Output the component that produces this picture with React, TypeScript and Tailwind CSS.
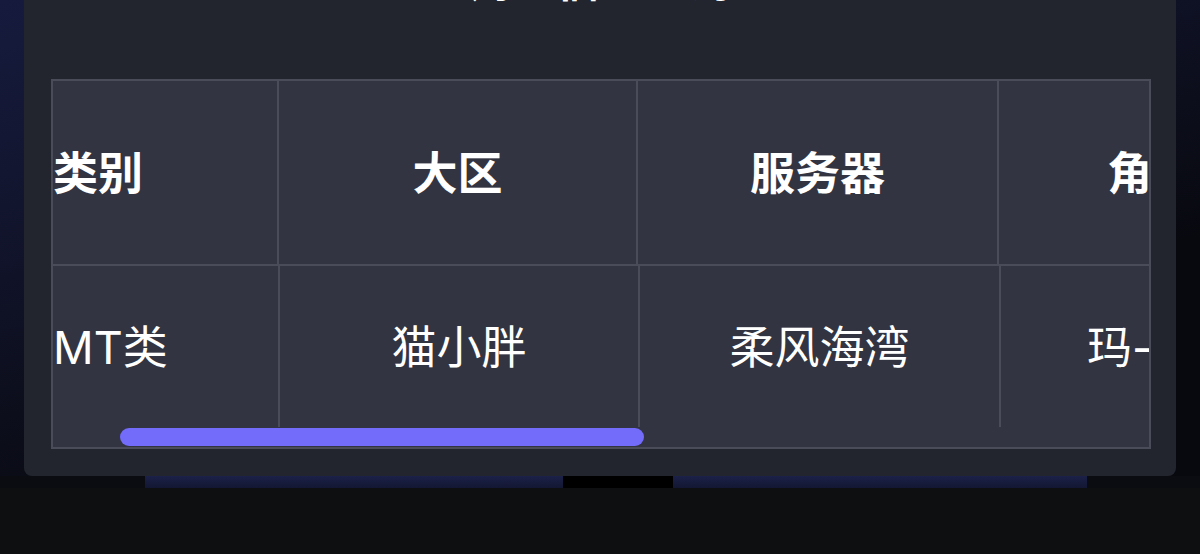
import React from "react";

const font = { fontFamily: 'Inter, "Noto Sans CJK SC", "Noto Sans", sans-serif' };

export default function App() {
  return (
    <div
      className="flex h-[554px] w-[1200px] flex-col overflow-hidden bg-[#0e0f11] text-white"
      style={font}
    >
      {/* backdrop behind the card */}
      <div className="flex h-[476px] bg-[linear-gradient(165deg,#161b3e_0%,#101328_35%,#08090f_70%)] px-[24px]">
        <div className="flex w-full flex-col overflow-hidden rounded-b-lg bg-[#23252e] px-[27px]">
          <h2 className="-mt-[41px] h-[44px] text-center text-[44px] leading-[44px] font-bold text-white">
            角色信息查询
          </h2>

          <div className="relative mt-[76px] h-[370px] w-[1100px] overflow-hidden border-2 border-[#4a4c5a] bg-[#323441]">
            {/* header row */}
            <div className="flex h-[185px] border-b-2 border-[#4a4c5a] text-[45px] font-bold">
              <div className="flex w-[226px] shrink-0 items-center border-r-2 border-[#4a4c5a] pt-[2px]">
                类别
              </div>
              <div className="flex w-[359px] shrink-0 items-center justify-center border-r-2 border-[#4a4c5a] pt-[2px]">
                大区
              </div>
              <div className="flex w-[361px] shrink-0 items-center justify-center border-r-2 border-[#4a4c5a] pt-[2px]">
                服务器
              </div>
              <div className="flex w-[360px] shrink-0 items-center pl-[108px] pt-[2px] whitespace-nowrap">
                角色名
              </div>
            </div>

            {/* body row */}
            <div className="flex h-[161px] text-[45px]">
              <div className="flex w-[227px] shrink-0 items-center border-r-2 border-[#4a4c5a] pt-[3px] whitespace-nowrap">
                MT类
              </div>
              <div className="flex w-[360px] shrink-0 items-center justify-center border-r-2 border-[#4a4c5a] pt-[3px]">
                猫小胖
              </div>
              <div className="flex w-[361px] shrink-0 items-center justify-center border-r-2 border-[#4a4c5a] pt-[3px]">
                柔风海湾
              </div>
              <div className="flex w-[360px] shrink-0 items-center pl-[86px] pt-[3px] whitespace-nowrap">
                玛-布林
              </div>
            </div>

            {/* horizontal scrollbar track */}
            <div className="h-[20px] pt-[1px] pl-[67px]">
              <div className="h-[18px] w-[524px] rounded-full bg-[#736bfa]" />
            </div>
          </div>
        </div>
      </div>

      {/* strip of the backdrop visible under the card */}
      <div className="flex h-[12px] bg-[#0b0c12]">
        <div className="w-[145px]" />
        <div className="w-[418px] bg-[linear-gradient(180deg,#1b2148,#131733)]" />
        <div className="w-[110px] bg-black" />
        <div className="w-[414px] bg-[linear-gradient(180deg,#1b2148,#131733)]" />
      </div>
    </div>
  );
}
